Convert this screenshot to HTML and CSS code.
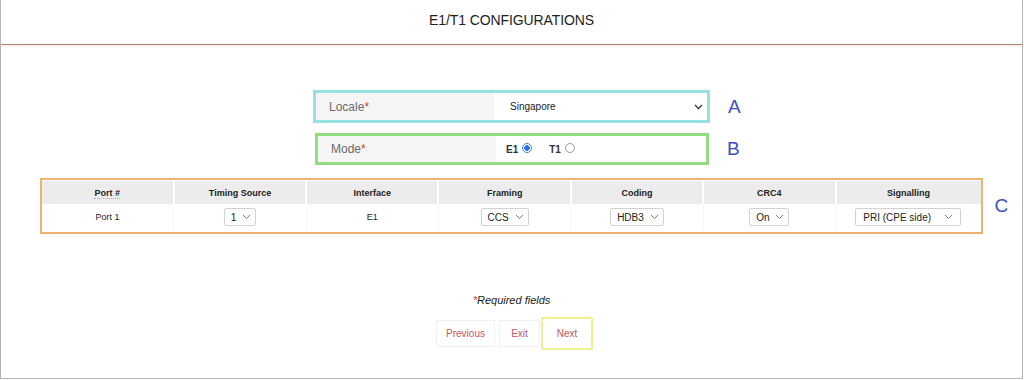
FILE: index.html
```html
<!DOCTYPE html>
<html>
<head>
<meta charset="utf-8">
<link rel="stylesheet" href="styles.css">
</head>
<body>
<div class="frame">
  <header class="head">
    <h1 class="title">E1/T1 CONFIGURATIONS</h1>
  </header>
  <main class="main">
    <div class="field field-locale">
      <div class="label">Locale<span class="req">*</span></div>
      <div class="value">
        <span class="val-text">Singapore</span>
        <svg class="chev-big" width="9" height="6" viewBox="0 0 9 6"><path d="M1 1l3.5 3.5L8 1" fill="none" stroke="#333" stroke-width="1.3"/></svg>
      </div>
      <span class="mark mark-a">A</span>
    </div>
    <div class="field field-mode">
      <div class="label">Mode<span class="req">*</span></div>
      <div class="value radios">
        <span class="radio-opt">E1 <span class="radio on"></span></span>
        <span class="radio-opt">T1 <span class="radio"></span></span>
      </div>
      <span class="mark mark-b">B</span>
    </div>
    <div class="table-wrap">
      <table class="ports">
        <thead>
          <tr>
            <th><abbr class="abbr">Port #</abbr></th>
            <th>Timing Source</th>
            <th>Interface</th>
            <th>Framing</th>
            <th>Coding</th>
            <th>CRC4</th>
            <th class="wide">Signalling</th>
          </tr>
        </thead>
        <tbody>
          <tr>
            <td>Port 1</td>
            <td><span class="sel">1<svg class="chev" width="9" height="6" viewBox="0 0 9 6"><path d="M1 1l3.5 3.5L8 1" fill="none" stroke="#666" stroke-width="0.9"/></svg></span></td>
            <td>E1</td>
            <td><span class="sel">CCS<svg class="chev" width="9" height="6" viewBox="0 0 9 6"><path d="M1 1l3.5 3.5L8 1" fill="none" stroke="#666" stroke-width="0.9"/></svg></span></td>
            <td><span class="sel">HDB3<svg class="chev" width="9" height="6" viewBox="0 0 9 6"><path d="M1 1l3.5 3.5L8 1" fill="none" stroke="#666" stroke-width="0.9"/></svg></span></td>
            <td><span class="sel">On<svg class="chev" width="9" height="6" viewBox="0 0 9 6"><path d="M1 1l3.5 3.5L8 1" fill="none" stroke="#666" stroke-width="0.9"/></svg></span></td>
            <td><span class="sel sel-wide">PRI (CPE side)<svg class="chev" width="9" height="6" viewBox="0 0 9 6"><path d="M1 1l3.5 3.5L8 1" fill="none" stroke="#666" stroke-width="0.9"/></svg></span></td>
          </tr>
        </tbody>
      </table>
      <span class="mark mark-c">C</span>
    </div>
    <p class="required"><span class="req">*</span>Required fields</p>
    <div class="buttons">
      <button class="btn btn-prev">Previous</button>
      <button class="btn btn-exit">Exit</button>
      <button class="btn btn-next">Next</button>
    </div>
  </main>
</div>
</body>
</html>
```

FILE: styles.css
```css
* { box-sizing: border-box; }
html, body { margin: 0; padding: 0; background: #fff; }
body { font-family: "Liberation Sans", Arial, sans-serif; color: #222; }

.frame {
  width: 1023px;
  height: 379px;
  border: 1px solid #b4b4b4;
  border-top: none;
  background: #fff;
}

.head {
  height: 45px;
  border-bottom: 1px solid #b08379;
  box-shadow: 0 1px 2px rgba(230, 190, 185, 0.35);
  display: flex;
  align-items: center;
  justify-content: center;
}
.title {
  margin: 0;
  font-size: 14px;
  font-weight: normal;
  color: #1e1e1e;
  padding-bottom: 4px;
  letter-spacing: -0.1px;
}

.main {
  display: flex;
  flex-direction: column;
  align-items: center;
  padding-top: 45px;
}

.field {
  position: relative;
  display: flex;
  height: 33px;
  border: 3px solid #97e1e3;
}
.field-locale { width: 397px; }
.field-mode {
  width: 394px;
  height: 32px;
  margin-top: 10px;
  border-color: #92dc82;
  margin-left: 1px;
}
.label {
  width: 178px;
  background: #f5f5f5;
  font-size: 12px;
  color: #6a6a6a;
  display: flex;
  align-items: center;
  padding-left: 13px;
}
.req { color: #d23a3a; }
.value {
  flex: 1;
  display: flex;
  align-items: center;
  padding-left: 16px;
  font-size: 10px;
  color: #222;
  background: #fff;
}
.val-text { flex: 1; }
.chev-big { margin-right: 4px; }

.radios { padding-left: 10px; gap: 17px; }
.radio-opt {
  display: inline-flex;
  align-items: center;
  gap: 3px;
  font-weight: bold;
  font-size: 10px;
  color: #333;
}
.radio {
  display: inline-block;
  width: 10px;
  height: 10px;
  border: 1px solid #999;
  border-radius: 50%;
  background: #fff;
  margin-left: 1px;
  margin-top: -3px;
}
.radio.on {
  border-color: #3f7fe6;
  background: radial-gradient(circle, #2f6fe4 0 2.6px, #fff 3px);
}

.mark {
  position: absolute;
  top: 50%;
  transform: translateY(-50%);
  font-size: 19px;
  color: #3c4fc4;
  font-family: "Liberation Sans", Arial, sans-serif;
}
.mark-a { left: calc(100% + 21px); }
.mark-b { left: calc(100% + 21px); }
.mark-c { left: calc(100% + 14px); }

.table-wrap {
  position: relative;
  margin-top: 13px;
  width: 943px;
  border: 2px solid #efb273;
  padding: 1px 0 2px 0;
  margin-left: -1px;
}
.ports {
  width: 100%;
  border-collapse: collapse;
  table-layout: fixed;
  font-size: 9px;
}
.ports th {
  background: #ececec;
  font-weight: bold;
  height: 23px;
  color: #222;
  border-left: 2px solid #fff;
  text-align: center;
}
.ports th:first-child { border-left: none; }
.ports th.wide { width: 145px; }
.ports td {
  height: 26px;
  text-align: center;
  color: #222;
  border-left: 1px solid #f6f6f6;
}
.ports td:first-child { border-left: none; }
.abbr {
  text-decoration: none;
  border-bottom: 1px dotted #aaa;
}

.sel {
  display: inline-flex;
  align-items: center;
  gap: 6px;
  height: 18px;
  padding: 0 4px 0 6px;
  border: 1px solid #d2d2d2;
  border-radius: 2px;
  background: #fff;
  font-size: 10px;
  color: #222;
  vertical-align: middle;
}
.sel-wide {
  width: 106px;
  justify-content: space-between;
  padding-left: 7px;
  padding-right: 7px;
}

.required {
  margin: 60px 0 0 0;
  font-size: 11px;
  font-style: italic;
  color: #222;
  line-height: 13px;
}

.buttons {
  display: flex;
  align-items: center;
  margin-top: 10px;
  margin-left: 6px;
}
.btn {
  font-family: "Liberation Sans", Arial, sans-serif;
  font-size: 10px;
  color: #c9555e;
  background: #fff;
  border: 1px solid #f1f1f1;
  height: 27px;
  padding: 0;
  cursor: pointer;
}
.btn-prev { width: 59px; }
.btn-exit { width: 41px; margin-left: 4px; }
.btn-next {
  height: 33px;
  width: 52px;
  border: 2px solid #f0ef93;
  margin-left: 1px;
}
```
